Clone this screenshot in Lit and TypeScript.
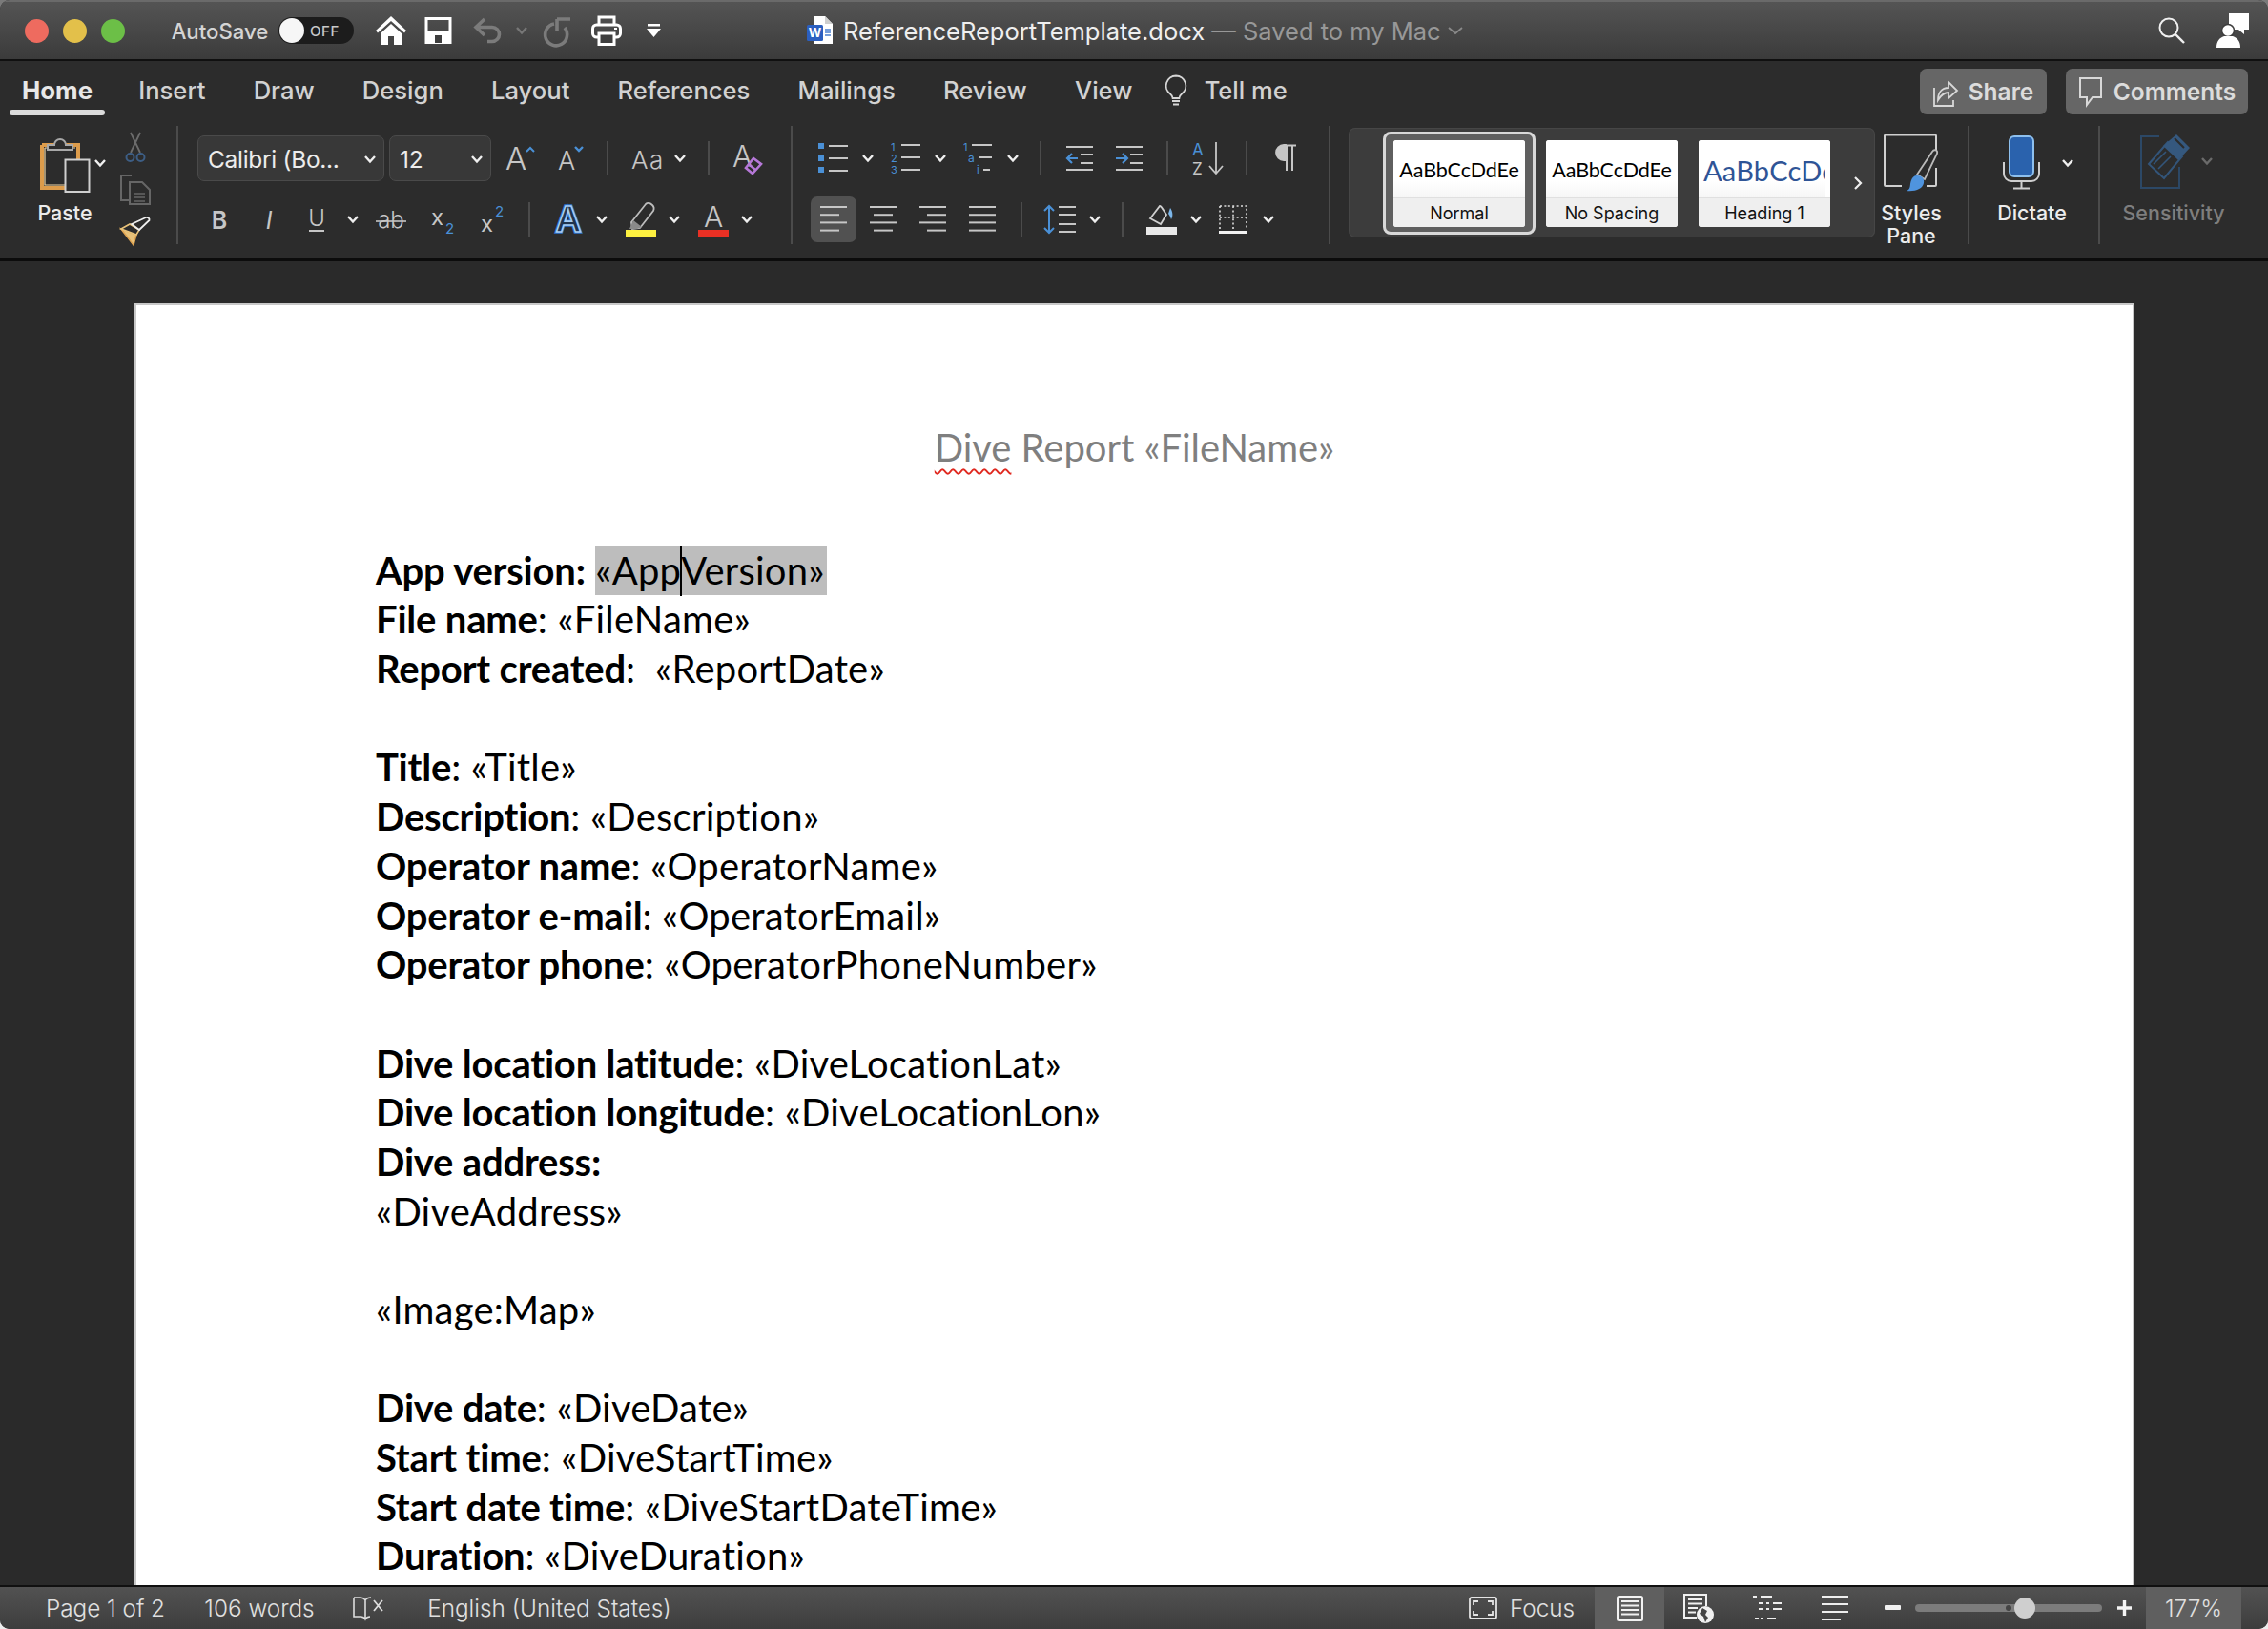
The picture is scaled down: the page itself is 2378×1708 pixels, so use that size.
import { LitElement, html, svg, css, nothing } from "lit";
import { customElement } from "lit/decorators.js";

type Item = [number, number, unknown, string?];
const place = (items: Item[], origin = 0) => {
  let cur = origin;
  return items.map(([x, w, c, cls]) => {
    const m = x - cur;
    cur = x + w;
    return html`<span class="cell ${cls ?? ""}" style="margin-left:${m}px;width:${w}px">${c}</span>`;
  });
};

const G = "#c6c6c6";
const BL = "#4a90d6";

const chev = (c = "#f0f0f0") => html`<svg width="14" height="10" viewBox="0 0 14 10"><path d="M2 2l5 5.5L12 2" fill="none" stroke=${c} stroke-width="2.4"/></svg>`;
const sep = html`<span class="sep"></span>`;

const home = html`<svg width="32" height="30" viewBox="0 0 32 30"><path d="M16 0L32 15l-2 2.4L16 5 2 17.4 0 15z" fill="#fff"/><path d="M5 18L16 8l11 10v12h-8v-9h-6v9H5z" fill="#fff"/></svg>`;
const save = html`<svg width="29" height="28" viewBox="0 0 29 28"><path d="M2 1.5h25v25H2z" fill="none" stroke="#fff" stroke-width="3"/><path d="M2 14h25v13H2z" fill="#fff"/><path d="M11 27v-8h7v8z" fill="#3e3e3e"/></svg>`;
const undo = html`<svg width="30" height="28" viewBox="0 0 30 28"><path d="M12 2L3 10.5l9 8.5M3 10.5h17a7.5 7.5 0 0 1 0 15h-5" fill="none" stroke="#7b7b7b" stroke-width="3.6"/></svg>`;
const redo = html`<svg width="30" height="29" viewBox="0 0 30 29"><path d="M14 2h14M14 2v12M11 7A11.5 11.5 0 1 0 22 11" fill="none" stroke="#7b7b7b" stroke-width="3.6"/></svg>`;
const printer = html`<svg width="32" height="32" viewBox="0 0 32 32"><path d="M8 10V2h16v8" fill="none" stroke="#fff" stroke-width="3"/><rect x="1.5" y="10" width="29" height="13" rx="4" fill="none" stroke="#fff" stroke-width="3"/><rect x="8" y="19" width="16" height="11.5" fill="#3e3e3e" stroke="#fff" stroke-width="3"/><path d="M24 14h3" stroke="#fff" stroke-width="2"/></svg>`;
const customize = html`<svg width="15" height="14" viewBox="0 0 15 14"><path d="M1 0h13v2.5H1z" fill="#fff"/><path d="M0 5h15l-7.5 9z" fill="#fff"/></svg>`;
const docIcon = html`<svg width="27" height="30" viewBox="0 0 27 30"><path d="M7 0h12l8 8v21H7z" fill="#fff"/><path d="M19 0v8h8z" fill="#cfcfcf"/><path d="M19 14h6M19 17h6M19 20h6" stroke="#4a7fd0" stroke-width="1.5"/><rect x="0" y="9" width="17" height="17" rx="1.5" fill="#2b5fc0"/><text x="8.5" y="22" font-size="13" font-weight="700" text-anchor="middle" fill="#fff">W</text></svg>`;
const search = html`<svg width="28" height="28" viewBox="0 0 28 28"><circle cx="11" cy="11" r="9.5" fill="none" stroke="#f0f0f0" stroke-width="2"/><path d="M18 18l9 9" stroke="#f0f0f0" stroke-width="2.4"/></svg>`;
const person = html`<svg width="34" height="36" viewBox="0 0 34 36"><path d="M13 0h21v17h-5v5l-6-5H13z" fill="#fff"/><circle cx="12" cy="18" r="6.5" fill="#fff" stroke="#3e3e3e" stroke-width="1.5"/><path d="M0 36c0-7 3-10 8-12h9c5 2 8 5 8 12z" fill="#fff"/></svg>`;
const bulb = html`<svg width="24" height="33" viewBox="0 0 24 33"><path d="M12 1.5a10.5 10.5 0 0 0-6 19c1.5 1.2 2.4 2.7 2.6 4.5h6.8c.2-1.8 1.1-3.3 2.6-4.5a10.5 10.5 0 0 0-6-19z" fill="none" stroke="#d6d6d6" stroke-width="1.8"/><path d="M8 28h8M9 31.5h6" stroke="#d6d6d6" stroke-width="2"/></svg>`;
const shareI = html`<svg width="26" height="34" viewBox="0 0 26 34"><path d="M1 13v19h20v-6" fill="none" stroke="#d8d8d8" stroke-width="1.8"/><path d="M5 26c0-8 4-13 11-13V7l9 9-9 8v-6c-5 0-8 3-11 8z" fill="none" stroke="#d8d8d8" stroke-width="1.8"/></svg>`;
const commentI = html`<svg width="26" height="36" viewBox="0 0 26 36"><path d="M2 4h22v20H15l-6 8v-8H2z" fill="none" stroke="#d8d8d8" stroke-width="2"/></svg>`;

const pasteI = html`<svg width="53" height="60" viewBox="0 0 53 60"><path d="M2 10h38v18M2 10v45h24" fill="none" stroke="#dd9c4b" stroke-width="4"/><path d="M5 13v39h21M5 13h32" fill="none" stroke="#f0d8a8" stroke-width="1.2"/><path d="M8 15v-5h7a6 6 0 0 1 12 0h7v5z" fill="#2c2c2c" stroke="#a8a8a8" stroke-width="2"/><rect x="26.5" y="25.5" width="25" height="33.5" fill="#2c2c2c" stroke="#cfcfcf" stroke-width="2"/></svg>`;
const cutI = html`<svg width="22" height="33" viewBox="0 0 22 33"><path d="M6 22L16 1M16 22L6 1" stroke="#6c6c6c" stroke-width="1.8"/><circle cx="5.5" cy="27" r="4" fill="none" stroke="#3d5e85" stroke-width="2"/><circle cx="16.5" cy="27" r="4" fill="none" stroke="#3d5e85" stroke-width="2"/></svg>`;
const copyI = html`<svg width="32" height="32" viewBox="0 0 32 32"><path d="M12 1H1v26h9" fill="none" stroke="#666" stroke-width="2"/><path d="M10 8h13l8 8v15H10z" fill="#2c2c2c" stroke="#666" stroke-width="2"/><path d="M15 20h11M15 24h11M15 28h11" stroke="#666" stroke-width="1.5"/></svg>`;
const painterI = html`<svg width="32" height="30" viewBox="0 0 32 30"><path d="M1 13l16 6-3 11z" fill="#e8c27a" stroke="#e0a552" stroke-width="1.5"/><path d="M1 13l9-5 10 6-3 5z" fill="#2c2c2c" stroke="#e8c27a" stroke-width="1.6"/><path d="M12 8L27 1c2-.5 4 1 3.5 3L20 14z" fill="#2c2c2c" stroke="#eee" stroke-width="1.8"/></svg>`;

const growI = html`<svg width="31" height="30" viewBox="0 0 31 30"><text x="0" y="27" font-size="33" font-weight="300" fill=${G}>A</text><path d="M22 8l4-4 4 4" fill="none" stroke=${BL} stroke-width="2"/></svg>`;
const shrinkI = html`<svg width="28" height="28" viewBox="0 0 28 28"><text x="0" y="26" font-size="27" font-weight="300" fill=${G}>A</text><path d="M18 2l4 4 4-4" fill="none" stroke=${BL} stroke-width="2.4"/></svg>`;
const aaI = html`<svg width="34" height="26" viewBox="0 0 34 26"><text x="0" y="24" font-size="26" font-weight="300" letter-spacing="1.5" fill=${G}>Aa</text></svg>`;
const clearI = html`<svg width="32" height="34" viewBox="0 0 32 34"><text x="0" y="26" font-size="31" font-weight="300" fill=${G}>A</text><path d="M22 17l8 6-9 10-7-6z" fill="none" stroke="#b678d8" stroke-width="2.6"/><path d="M18 24l6 5" stroke="#b678d8" stroke-width="2.5"/></svg>`;
const boldI = html`<svg width="18" height="26" viewBox="0 0 18 26"><text x="9" y="23" text-anchor="middle" font-size="25" font-weight="600" fill=${G}>B</text></svg>`;
const italI = html`<svg width="18" height="26" viewBox="0 0 18 26"><text x="9" y="23" text-anchor="middle" font-size="25" font-style="italic" font-family="Liberation Serif" fill=${G}>I</text></svg>`;
const underI = html`<svg width="20" height="30" viewBox="0 0 20 30"><text x="10" y="22" text-anchor="middle" font-size="24" font-weight="300" fill=${G}>U</text><path d="M2 27h16" stroke=${G} stroke-width="2"/></svg>`;
const strikeI = html`<svg width="34" height="26" viewBox="0 0 34 26"><text x="17" y="22" text-anchor="middle" font-size="24" font-weight="300" fill=${G}>ab</text><path d="M1 15h32" stroke=${G} stroke-width="1.6"/></svg>`;
const subI = html`<svg width="26" height="32" viewBox="0 0 26 32"><text x="0" y="22" font-size="24" fill=${G}>x</text><text x="15" y="31" font-size="15" fill=${BL}>2</text></svg>`;
const supI = html`<svg width="26" height="30" viewBox="0 0 26 30"><text x="0" y="28" font-size="24" fill=${G}>x</text><text x="15" y="12" font-size="15" fill=${BL}>2</text></svg>`;
const effectI = html`<svg width="32" height="32" viewBox="0 0 32 32"><text x="16" y="29" text-anchor="middle" font-size="37" font-weight="600" fill="#2f73c8" stroke="#2f73c8" stroke-width="3.4">A</text><text x="16" y="29" text-anchor="middle" font-size="37" font-weight="600" fill="#20344e" stroke="#a6cdf5" stroke-width="1.6">A</text></svg>`;
const hiliteI = html`<svg width="32" height="38" viewBox="0 0 32 38"><path d="M6 22L21 3c2-2 5-1 7 1s2 4 1 6L15 28l-8 1z" fill="#2c2c2c" stroke="#bdbdbd" stroke-width="1.8"/><path d="M4 29l4-9 9 7-5 2z" fill="#8a8a8a"/><rect x="0" y="30" width="32" height="8" fill="#fdf040"/></svg>`;
const colorI = html`<svg width="32" height="38" viewBox="0 0 32 38"><text x="16" y="27" text-anchor="middle" font-size="30" font-weight="300" fill=${G}>A</text><rect x="0" y="30" width="32" height="8" fill="#ea3024"/></svg>`;

const bulletsI = html`<svg width="31" height="32" viewBox="0 0 31 32"><path d="M11 3h20M11 16h20M11 29h20" stroke=${G} stroke-width="2"/><path d="M0 0h6v6H0zM0 13h6v6H0zM0 25h6v6H0z" fill=${BL}/></svg>`;
const numberI = html`<svg width="31" height="34" viewBox="0 0 31 34"><path d="M11 3h20M11 16h20M11 29h20" stroke=${G} stroke-width="2"/><text x="0" y="9" font-size="11" fill=${BL}>1</text><text x="0" y="21" font-size="11" fill=${BL}>2</text><text x="0" y="33" font-size="11" fill=${BL}>3</text></svg>`;
const multiI = html`<svg width="31" height="34" viewBox="0 0 31 34"><path d="M9 3h21M17 16h13M21 29h7" stroke=${G} stroke-width="2"/><text x="0" y="9" font-size="11" fill=${BL}>1</text><text x="5" y="21" font-size="12" fill=${BL}>a</text><text x="14" y="33" font-size="11" fill=${BL}>i</text></svg>`;
const outdentI = html`<svg width="30" height="28" viewBox="0 0 30 28"><path d="M1 2h28M16 10h13M16 19h13M1 26h28" stroke=${G} stroke-width="2"/><path d="M13 14H2M7 9l-5 5 5 5" fill="none" stroke=${BL} stroke-width="2.2"/></svg>`;
const indentI = html`<svg width="30" height="28" viewBox="0 0 30 28"><path d="M1 2h28M16 10h13M16 19h13M1 26h28" stroke=${G} stroke-width="2"/><path d="M1 14h11M8 9l5 5-5 5" fill="none" stroke=${BL} stroke-width="2.2"/></svg>`;
const sortI = html`<svg width="33" height="36" viewBox="0 0 33 36"><text x="0" y="15" font-size="17" fill=${BL}>A</text><text x="0" y="35" font-size="17" fill=${G}>Z</text><path d="M25 1v32M18 26l7 8 7-8" fill="none" stroke=${G} stroke-width="1.8"/></svg>`;
const pilcrow = html`<svg width="21" height="30" viewBox="0 0 21 30"><path d="M10 1H8a8 8 0 0 0 0 16h2z" fill=${G} stroke=${G} stroke-width="1.8"/><path d="M11 1v27M17 1v27M8 1.5h13" fill="none" stroke=${G} stroke-width="2"/></svg>`;
const alignI = (rows: [number, number][]) => html`<svg width="28" height="28" viewBox="0 0 28 28">${rows.map(([a, b], i) => svg`<rect x=${a} y=${i * 8.2} width=${b - a} height="2" fill=${G}></rect>`)}</svg>`;
const leftA = alignI([[0, 28], [0, 20], [0, 28], [0, 20]]);
const centerA = alignI([[0, 28], [4, 24], [0, 28], [4, 24]]);
const rightA = alignI([[0, 28], [8, 28], [0, 28], [8, 28]]);
const justA = alignI([[0, 28], [0, 28], [0, 28], [0, 28]]);
const spacingI = html`<svg width="33" height="30" viewBox="0 0 33 30"><path d="M15 2h18M15 10h18M15 20h18M15 28h18" stroke=${G} stroke-width="2"/><path d="M5 1v28M0 6l5-5 5 5M0 24l5 5 5-5" fill="none" stroke=${BL} stroke-width="2"/></svg>`;
const shadeI = html`<svg width="32" height="32" viewBox="0 0 32 32"><path d="M4 15L14 2c2 0 4 5 7 9l-6 10z" fill="#2c2c2c" stroke="#d0d0d0" stroke-width="1.8"/><path d="M25 4c3 4 3 9 1 12-1-3-2-5-3-6z" fill="#7db7ea"/><rect x="0" y="24" width="32" height="8" fill="#e8e8e8"/></svg>`;
const bordersI = html`<svg width="30" height="30" viewBox="0 0 30 30"><path d="M1 1h28v24M1 1v24M15 1v24M1 13h28" fill="none" stroke="#dcdcdc" stroke-width="1.6" stroke-dasharray="2 2.4"/><path d="M0 28.5h30" stroke="#f2f2f2" stroke-width="3"/></svg>`;

const stylesI = html`<svg width="60" height="62" viewBox="0 0 60 62"><path d="M20 55H3a1 1 0 0 1-1-1V2.5a1 1 0 0 1 1-1h52a1 1 0 0 1 1 1V21M56 36V54a1 1 0 0 1-1 1H46" fill="none" stroke="#cfcfcf" stroke-width="2"/><path d="M36 43L52 19c2-3 6-2 5 2L44 48z" fill="#2c2c2c" stroke="#bbb" stroke-width="1.8"/><path d="M36 44c5 0 8 3 7 8-1 6-9 9-18 8 5-2 3-6 5-11 1-3 3-5 6-5z" fill="#4f94de"/></svg>`;
const micI = html`<svg width="39" height="57" viewBox="0 0 39 57"><rect x="7" y="1" width="25" height="42" rx="5" fill="#2a62ad" stroke="#8ec0ee" stroke-width="2"/><path d="M1 28v12a8 8 0 0 0 8 8h21a8 8 0 0 0 8-8V28" fill="none" stroke="#cfcfcf" stroke-width="2"/><path d="M19.5 48v7M11 55.5h17" stroke="#cfcfcf" stroke-width="2"/></svg>`;
const sensI = html`<svg width="54" height="58" viewBox="0 0 54 58"><path d="M20 3H1v54h40V35" fill="none" stroke="#2c4866" stroke-width="2"/><path d="M29 9L9 32l16 15 19-23z" fill="none" stroke="#33557a" stroke-width="2"/><path d="M14 32l13-13M19 37l13-13" stroke="#33557a" stroke-width="1.6"/><path d="M24 13L38 1l14 14-12 13z" fill="#35587e"/><path d="M36 5l10 10" stroke="#2c2c2c" stroke-width="2"/></svg>`;

const bookI = html`<svg width="32" height="26" viewBox="0 0 32 26"><path d="M1 2h6c3 0 5 1 6 3 1-2 3-3 6-3M1 2v20h7c3 0 4 1 5 3 1-2 2-3 5-3M13 5v20" fill="none" stroke="#ddd" stroke-width="1.6"/><path d="M22 5l9 11M31 5l-9 11" stroke="#ddd" stroke-width="1.8"/></svg>`;
const focusI = html`<svg width="30" height="24" viewBox="0 0 30 24"><rect x="1" y="1" width="28" height="22" rx="2" fill="none" stroke="#e4e4e4" stroke-width="1.8"/><path d="M5 9V5h5M25 9V5h-5M5 15v4h5M25 15v4h-5" fill="none" stroke="#e4e4e4" stroke-width="1.8"/></svg>`;
const printV = html`<svg width="28" height="27" viewBox="0 0 28 27"><rect x="1" y="1" width="26" height="25" rx="1.5" fill="none" stroke="#f2f2f2" stroke-width="2"/><path d="M5 6h18M5 10.5h18M5 15h18M5 19.5h18" stroke="#f2f2f2" stroke-width="2.2"/></svg>`;
const webV = html`<svg width="32" height="31" viewBox="0 0 32 31"><path d="M24 13V1H1v24h13" fill="none" stroke="#f0f0f0" stroke-width="2"/><path d="M5 6h15M5 10.5h15M5 15h10M5 19.5h8" stroke="#f0f0f0" stroke-width="2"/><circle cx="23" cy="22" r="9" fill="#f0f0f0"/><path d="M20 15l5 3-2 4 3 3-3 5-2-6-4-3z" fill="#444"/></svg>`;
const outlineV = html`<svg width="30" height="28" viewBox="0 0 30 28"><path d="M8 2h12M14 9h3M21 9h9M14 15h3M21 15h9M8 25h3M15 25h9" stroke="#eee" stroke-width="2"/><path d="M0 2h4M6 9h4M6 15h4M2 25h4" stroke="#eee" stroke-width="2"/></svg>`;
const draftV = html`<svg width="28" height="28" viewBox="0 0 28 28"><path d="M0 2h28M0 10h28M0 18h28M0 26h20" stroke="#eee" stroke-width="2.2"/></svg>`;
const minusI = html`<svg width="17" height="6" viewBox="0 0 17 6"><rect width="17" height="5" rx="1" fill="#f0f0f0"/></svg>`;
const plusI = html`<svg width="15" height="16" viewBox="0 0 15 16"><path d="M7.5 0v16M0 8h15" stroke="#f4f4f4" stroke-width="3.4"/></svg>`;

const docSections: string[][][] = [
  [["App version:", " ", "SEL"], ["File name", ": ", "«FileName»"], ["Report created", ":  ", "«ReportDate»"]],
  [["Title", ": ", "«Title»"], ["Description", ": ", "«Description»"], ["Operator name", ": ", "«OperatorName»"], ["Operator e-mail", ": ", "«OperatorEmail»"], ["Operator phone", ": ", "«OperatorPhoneNumber»"]],
  [["Dive location latitude", ": ", "«DiveLocationLat»"], ["Dive location longitude", ": ", "«DiveLocationLon»"], ["Dive address:", "", ""], ["", "", "«DiveAddress»"]],
  [["", "", "«Image:Map»"]],
  [["Dive date", ": ", "«DiveDate»"], ["Start time", ": ", "«DiveStartTime»"], ["Start date time", ": ", "«DiveStartDateTime»"], ["Duration", ": ", "«DiveDuration»"]],
];

@customElement("app-root")
export class AppRoot extends LitElement {
  static styles = css`
    :host { display: block; width: 100%; height: 100vh; font-family: "Inter", "Liberation Sans", sans-serif; background: linear-gradient(#7a7a7a 50%, #ededed 50%); }
    text { font-family: "Inter", "Liberation Sans", sans-serif; }
    svg { overflow: visible; display: block; }
    .win { height: 100vh; display: flex; flex-direction: column; overflow: hidden; background: #2a2a2a; border-radius: 10px; color: #ddd; }
    .cell { display: flex; flex: none; align-items: center; justify-content: center; white-space: nowrap; }
    .sep { display: block; width: 2px; height: 36px; background: #4b4b4b; }

    .titlebar { flex: none; box-sizing: border-box; height: 64px; display: flex; align-items: center; background: linear-gradient(#545454, #3b3b3b); border-top: 2px solid #6a6a6a; border-bottom: 2px solid #101010; }
    .light { display: block; width: 25px; height: 25px; border-radius: 50%; }
    .auto { font-size: 22.2px; font-weight: 500; color: #d4d4d4; }
    .toggle { display: flex; align-items: center; width: 79px; height: 28px; border-radius: 14px; background: #1c1c1c; }
    .knob { width: 26px; height: 26px; border-radius: 50%; background: #f6f6f6; margin-left: 1px; }
    .off { font-size: 15px; font-weight: 500; color: #c8c8c8; margin-left: 6px; letter-spacing: .6px; }
    .fname { font-size: 25.5px; color: #efefef; padding-top: 1px; }
    .saved { font-size: 25.5px; color: #989898; padding-top: 1px; }

    .tabs { flex: none; height: 68px; display: flex; align-items: flex-start; background: #2c2c2c; box-sizing: border-box; }
    .tablist { display: flex; align-items: center; height: 61px; gap: 50.2px; padding-left: 23px; }
    .tab { position: relative; font-size: 25.6px; font-weight: 500; color: #d2d2d2; }
    .tab.on { font-weight: 700; color: #e8e8e8; font-size: 25.8px; margin-right: -2px; }
    .tab.on::after { content: ""; position: absolute; left: -13px; right: -13px; bottom: -11px; height: 6px; border-radius: 3px; background: #dcdcdc; }
    .tell { display: flex; align-items: center; gap: 18px; margin-left: -17px; }
    .tabright { margin-left: auto; display: flex; gap: 20px; padding: 8px 21px 0 0; }
    .btn { box-sizing: border-box; height: 48px; display: flex; align-items: center; justify-content: center; gap: 11px; background: #666; border-radius: 7px; font-size: 24.5px; font-weight: 600; color: #dcdcdc; }
    .share { width: 133px; }
    .comments { width: 191px; }

    .ribbon { flex: none; box-sizing: border-box; height: 142px; display: flex; align-items: flex-start; background: #2c2c2c; border-bottom: 3px solid #0c0c0c; padding-bottom: 16px; }
    .grp { box-sizing: border-box; height: 124px; flex: none; }
    .bl { border-left: 2px solid #4b4b4b; }
    .rows { display: flex; flex-direction: column; gap: 16px; padding-top: 10px; }
    .row { display: flex; align-items: center; height: 48px; }
    .font { width: 644px; }
    .para { width: 564px; }
    .clip { width: 185px; display: flex; align-items: flex-start; }
    .pastecol { flex-direction: column; padding-top: 10px; gap: 9px; }
    .ctl { font-size: 21.5px; font-weight: 500; color: #ececec; text-align: center; line-height: 24px; }
    .ctl.dim { color: #7e7e7e; width: 154px; }
    .chevdown { padding-top: 34px; }
    .tools3 { flex-direction: column; padding-top: 6px; gap: 12px; }
    .box { box-sizing: border-box; height: 48px; width: 100%; display: flex; align-items: center; justify-content: space-between; padding: 1px 7px 0 10px; background: #383838; border: 1.5px solid #4a4a4a; border-radius: 7px; font-size: 24.5px; color: #ececec; letter-spacing: -0.3px; }
    .selbg { height: 48px; background: #515151; border-radius: 7px; }

    .galgrp { width: 670px; display: flex; align-items: flex-start; }
    .gallery { box-sizing: border-box; width: 552px; height: 115px; margin: 2px 0 0 19px; padding: 4px 0 0 36px; background: #3c3c3c; border-radius: 7px; display: flex; align-items: flex-start; box-shadow: inset 0 0 0 1px #464646; }
    .frame { box-sizing: border-box; padding: 6px 8px; height: 108px; border: 3px solid #d8d8d8; border-radius: 8px; background: #5f5f5f; }
    .card { width: 138px; height: 91px; display: flex; flex-direction: column; background: #fff; border-radius: 3px; overflow: hidden; color: #000; }
    .gallery > .card { margin-top: 9px; margin-left: 11px; }
    .gallery > .card + .card { margin-left: 22px; }
    .cardtop { flex: 1; display: flex; align-items: center; justify-content: center; font-family: "Lato", sans-serif; font-size: 21.5px; letter-spacing: -0.1px; overflow: hidden; white-space: nowrap; background: linear-gradient(#fff 70%, #f6f6f6); padding-top: 2px; }
    .cardtop.h1 { font-size: 29px; color: #2f5496; justify-content: flex-start; padding-left: 5px; letter-spacing: 0.2px; border-right: 5px solid #fff; }
    .cardlab { height: 30px; display: flex; align-items: center; justify-content: center; font-size: 18px; background: #efefef; border-top: 1px solid #e0e0e0; color: #111; }
    .galchev { margin: 46px 0 0 24px; display: flex; }
    .sc { width: 76px; display: flex; flex-direction: column; align-items: center; padding-top: 8px; }
    .sc .ctl { margin-top: 9px; }
    .dict { width: 137px; display: flex; flex-direction: column; }
    .dictrow { display: flex; align-items: center; height: 57px; margin-top: 10px; }
    .dict .ctl { margin-top: 12px; padding-right: 4px; }
    .sens { display: flex; flex-direction: column; width: 176px; }
    .sens .dictrow { margin-top: 8px; }
    .sens .ctl { margin-top: 14px; }

    .canvas { flex: 1; min-height: 0; overflow: hidden; background: #2a2a2a; padding: 44px 140px 0 141px; }
    .page { box-sizing: border-box; height: 100%; min-height: 1400px; background: #fff; border: 2px solid #c8c8c8; border-bottom: 0; padding: 0 0 0 251px; font-family: "Lato", sans-serif; color: #000; font-size: 40px; line-height: 51.7px; letter-spacing: 0.22px; }
    .doctitle { text-align: center; color: #7f7f7f; font-size: 40px; letter-spacing: -0.05px; padding: 124px 251px 0 0; margin-bottom: 77px; }
    .wavy { text-decoration: underline wavy #e0281f 1.6px; text-underline-offset: 7px; }
    .section { margin-bottom: 51.7px; }
    .section:last-child { margin-bottom: 0; }
    .line { white-space: pre; height: 51.7px; }
    .line b { font-weight: 700; letter-spacing: -0.2px; }
    .hl { display: inline-block; background: #bdbdbd; height: 51.7px; padding-right: 2px; }
    .caret { display: inline-block; width: 0; height: 51.7px; box-shadow: 0 0 0 1px #000; vertical-align: top; }

    .status { flex: none; box-sizing: border-box; height: 46px; display: flex; align-items: stretch; background: linear-gradient(#525252, #3d3d3d); border-top: 2px solid #101010; }
    .stx { font-size: 24.3px; font-weight: 300; color: #e0e0e0; }
    .vsel { background: #5f5f5f; }
    .track { display: flex; align-items: center; position: relative; width: 196px; height: 8px; border-radius: 4px; background: #7c7c7c; }
    .tick { position: absolute; left: 95px; top: 1px; width: 6px; height: 6px; border-radius: 50%; background: #444; }
    .thumb { position: absolute; left: 104px; top: -7px; width: 22px; height: 22px; border-radius: 50%; background: #cfcfcf; }
  `;

  private renderLine(l: string[]) {
    const [b, sepT, v] = l;
    const val = v === "SEL" ? html`<span class="hl">«App<span class="caret"></span>Version»</span>` : v;
    return html`<div class="line">${b ? html`<b>${b}</b>` : nothing}${sepT}${val}</div>`;
  }

  render() {
    const title = place([
      [26, 25, html`<span class="light" style="background:#ee6b5f"></span>`],
      [66, 25, html`<span class="light" style="background:#e3c04a"></span>`],
      [106, 25, html`<span class="light" style="background:#6cbf47"></span>`],
      [181, 99, html`<span class="auto">AutoSave</span>`],
      [292, 79, html`<span class="toggle"><span class="knob"></span><span class="off">OFF</span></span>`],
      [394, 32, home], [445, 29, save], [496, 30, undo],
      [540, 14, chev("#777")], [570, 30, redo], [620, 32, printer], [678, 15, customize],
      [846, 27, docIcon],
      [884, 379, html`<span class="fname">ReferenceReportTemplate.docx</span>`],
      [1270, 241, html`<span class="saved">— Saved to my Mac</span>`],
      [1518, 16, html`<svg width="16" height="9" viewBox="0 0 16 9"><path d="M1 1l7 6 7-6" fill="none" stroke="#8a8a8a" stroke-width="1.8"/></svg>`],
      [2263, 28, search], [2324, 34, person],
    ]);

    const fontRow1 = place([
      [207, 196, html`<span class="box">Calibri (Bo...${chev()}</span>`],
      [408, 107, html`<span class="box">12${chev()}</span>`],
      [530, 31, growI], [585, 28, shrinkI], [636, 2, sep],
      [662, 34, aaI], [706, 14, chev()], [742, 2, sep], [768, 32, clearI],
    ], 187);
    const fontRow2 = place([
      [221, 18, boldI], [273, 18, italI], [322, 20, underI], [363, 14, chev()],
      [393, 34, strikeI], [452, 26, subI], [504, 26, supI], [554, 2, sep],
      [580, 32, effectI], [624, 14, chev()], [656, 32, hiliteI], [700, 14, chev()],
      [732, 32, colorI], [776, 14, chev()],
    ], 187);
    const paraRow1 = place([
      [858, 31, bulletsI], [903, 14, chev()], [934, 31, numberI], [979, 14, chev()],
      [1010, 31, multiI], [1055, 14, chev()], [1090, 2, sep], [1117, 30, outdentI],
      [1169, 30, indentI], [1223, 2, sep], [1250, 33, sortI], [1306, 2, sep], [1338, 21, pilcrow],
    ], 831);
    const paraRow2 = place([
      [850, 48, leftA, "selbg"], [912, 28, centerA], [964, 28, rightA], [1016, 28, justA],
      [1070, 2, sep], [1095, 33, spacingI], [1141, 14, chev()], [1176, 2, sep],
      [1202, 32, shadeI], [1247, 14, chev()], [1278, 30, bordersI], [1323, 14, chev()],
    ], 831);

    const statusItems = place([
      [49, 123, html`<span class="stx">Page 1 of 2</span>`],
      [214, 116, html`<span class="stx">106 words</span>`],
      [370, 32, bookI],
      [447, 258, html`<span class="stx">English (United States)</span>`],
      [1540, 30, focusI],
      [1584, 66, html`<span class="stx">Focus</span>`],
      [1672, 73, printV, "vsel"],
      [1765, 32, webV], [1838, 30, outlineV], [1910, 28, draftV],
      [1976, 17, minusI],
      [2008, 196, html`<span class="track"><span class="tick"></span><span class="thumb"></span></span>`],
      [2220, 15, plusI],
      [2250, 100, html`<span class="stx">177%</span>`, "vsel"],
    ]);

    return html`<div class="win">
      <div class="titlebar">${title}</div>
      <div class="tabs">
        <div class="tablist">
          <span class="tab on">Home</span>
          ${["Insert", "Draw", "Design", "Layout", "References", "Mailings", "Review", "View"].map((t) => html`<span class="tab">${t}</span>`)}
          <span class="tell">${bulb}<span class="tab">Tell me</span></span>
        </div>
        <div class="tabright">
          <span class="btn share">${shareI}Share</span>
          <span class="btn comments">${commentI}Comments</span>
        </div>
      </div>
      <div class="ribbon">
        <div class="grp clip">
          ${place([
            [30, 76, html`${pasteI}<span class="ctl">Paste</span>`, "pastecol"],
            [98, 14, chev(), "chevdown"],
            [126, 32, html`${cutI}${copyI}${painterI}`, "tools3"],
          ])}
        </div>
        <div class="grp bl rows font">
          <div class="row">${fontRow1}</div>
          <div class="row">${fontRow2}</div>
        </div>
        <div class="grp bl rows para">
          <div class="row">${paraRow1}</div>
          <div class="row">${paraRow2}</div>
        </div>
        <div class="grp bl galgrp">
          <div class="gallery">
            <div class="frame"><div class="card"><div class="cardtop">AaBbCcDdEe</div><div class="cardlab">Normal</div></div></div>
            <div class="card"><div class="cardtop">AaBbCcDdEe</div><div class="cardlab">No Spacing</div></div>
            <div class="card"><div class="cardtop h1">AaBbCcDdEe</div><div class="cardlab">Heading 1</div></div>
            <span class="galchev"><svg width="10" height="16" viewBox="0 0 10 16"><path d="M2 2l6 6-6 6" fill="none" stroke="#eee" stroke-width="2.2"/></svg></span>
          </div>
          <div class="sc">${stylesI}<span class="ctl">Styles<br />Pane</span></div>
        </div>
        <div class="grp bl dict">
          <div class="dictrow">${place([[2100, 39, micI], [2161, 14, chev()]], 2065)}</div>
          <span class="ctl">Dictate</span>
        </div>
        <div class="grp bl sens">
          <div class="dictrow">${place([[2244, 54, sensI], [2307, 14, chev("#6a6a6a")]], 2202)}</div>
          <span class="ctl dim">Sensitivity</span>
        </div>
      </div>
      <div class="canvas">
        <div class="page">
          <div class="doctitle"><span class="wavy">Dive</span> Report «FileName»</div>
          ${docSections.map((s) => html`<div class="section">${s.map((l) => this.renderLine(l))}</div>`)}
        </div>
      </div>
      <div class="status">${statusItems}</div>
    </div>`;
  }
}
